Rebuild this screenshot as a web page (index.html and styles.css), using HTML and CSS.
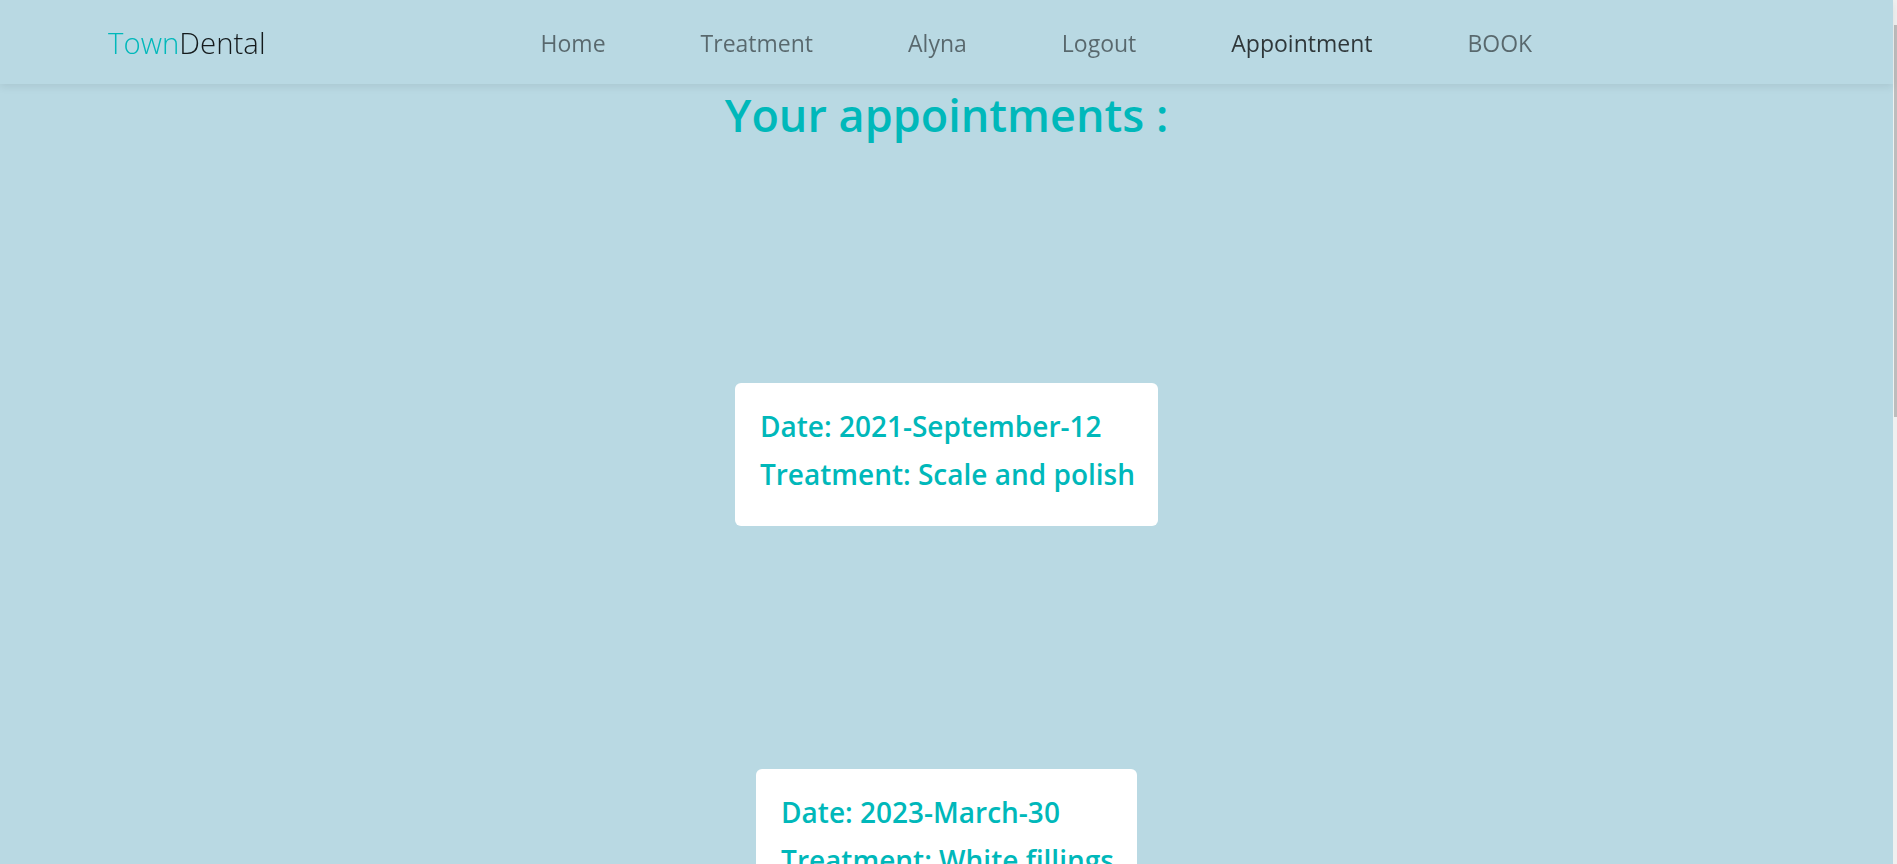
FILE: index.html
```html
<!DOCTYPE html>
<html lang="en">
<head>
<meta charset="utf-8">
<title>TownDental - Appointments</title>
<link rel="stylesheet" href="styles.css">
</head>
<body>
  <header class="navbar">
    <a class="brand" href="#"><span class="brand-town">Town</span><span class="brand-dental">Dental</span></a>
    <nav class="nav">
      <a class="nav-link" href="#">Home</a>
      <a class="nav-link" href="#">Treatment</a>
      <a class="nav-link" href="#">Alyna</a>
      <a class="nav-link" href="#">Logout</a>
      <a class="nav-link active" href="#">Appointment</a>
      <a class="nav-link" href="#">BOOK</a>
    </nav>
  </header>
  <main class="main">
    <h1 class="title">Your appointments :</h1>
    <section class="list">
      <div class="card">
        <p class="line">Date: 2021-September-12</p>
        <p class="line">Treatment: Scale and polish</p>
      </div>
      <div class="card">
        <p class="line">Date: 2023-March-30</p>
        <p class="line">Treatment: White fillings</p>
      </div>
    </section>
  </main>
  <div class="scrollbar" aria-hidden="true"><div class="scrollbar-thumb"></div></div>
</body>
</html>
```

FILE: styles.css
```css
html {
  background: #b9d9e3;
}
body {
  margin: 0;
  padding-right: 4px;
  background: #b9d9e3;
  font-family: "Open Sans", "Noto Sans", sans-serif;
}
.navbar {
  display: flex;
  align-items: center;
  height: 84px;
  padding-left: 108px;
  box-shadow: 0 3px 8px rgba(0, 0, 0, 0.08);
  position: relative;
  z-index: 1;
}
.brand {
  text-decoration: none;
  font-size: 29.4px;
  font-weight: 300;
  margin-top: 1px;
}
.brand-town {
  color: #00b8ba;
}
.brand-dental {
  color: #141a1c;
}
.nav {
  display: flex;
  gap: 95px;
  margin-left: 275px;
  padding-top: 2px;
}
.nav-link {
  text-decoration: none;
  font-size: 23px;
  font-weight: 400;
  color: rgba(0, 0, 0, 0.52);
}
.nav-link.active {
  color: rgba(0, 0, 0, 0.75);
}
.main {
  padding-bottom: 420px;
}
.title {
  margin: 0;
  padding-top: 3px;
  text-align: center;
  font-size: 45px;
  line-height: 56px;
  font-weight: 600;
  color: #00b8ba;
}
.list {
  display: flex;
  flex-direction: column;
  align-items: center;
  gap: 243px;
  padding-top: 240px;
}
.card {
  background: #ffffff;
  border-radius: 6px;
  padding: 19px 23px 28px 25px;
}
.line {
  margin: 0;
  font-size: 28px;
  line-height: 48px;
  font-weight: 600;
  color: #00b8ba;
  white-space: nowrap;
}
.scrollbar {
  position: fixed;
  top: 0;
  right: 0;
  width: 4px;
  height: 100%;
  background: #f0f0f0;
}
.scrollbar-thumb {
  margin-top: 25px;
  margin-left: 1px;
  height: 392px;
  background: #bdbdbd;
}
```
